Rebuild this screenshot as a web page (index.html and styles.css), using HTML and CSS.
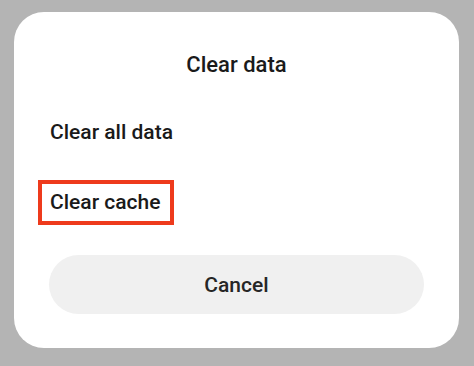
FILE: index.html
```html
<!DOCTYPE html>
<html>
<head>
<meta charset="utf-8">
<link rel="stylesheet" href="styles.css">
</head>
<body>
<div class="dialog">
  <div class="title">Clear data</div>
  <div class="options">
    <div class="option">Clear all data</div>
    <div class="option selected">Clear cache</div>
  </div>
  <div class="cancel">Cancel</div>
</div>
</body>
</html>
```
FILE: styles.css
```css
html, body {
  margin: 0;
  padding: 0;
}
body {
  width: 474px;
  height: 366px;
  background: #b4b4b4;
  font-family: Roboto, "Noto Sans", sans-serif;
  overflow: hidden;
}
.dialog {
  margin: 12px 0 0 14px;
  width: 445px;
  height: 336px;
  background: #ffffff;
  border-radius: 30px;
  box-sizing: border-box;
  padding: 36px 35px 0 35px;
  display: flex;
  flex-direction: column;
}
.title {
  text-align: center;
  font-size: 22px;
  font-weight: 500;
  line-height: 34px;
  color: #1a1a1a;
}
.options {
  display: flex;
  flex-direction: column;
  align-items: flex-start;
  margin-top: 28px;
  margin-left: -11px;
  gap: 25px;
}
.option {
  font-size: 21px;
  font-weight: 500;
  color: #1a1a1a;
  line-height: 37px;
  padding: 0 10px 0 8px;
  border: 4px solid transparent;
}
.option.selected {
  border-color: #ee3a1c;
}
.cancel {
  margin-top: 30px;
  height: 59px;
  border-radius: 30px;
  background: #f0f0f0;
  display: flex;
  align-items: center;
  justify-content: center;
  font-size: 21px;
  font-weight: 500;
  color: #262626;
}
```
